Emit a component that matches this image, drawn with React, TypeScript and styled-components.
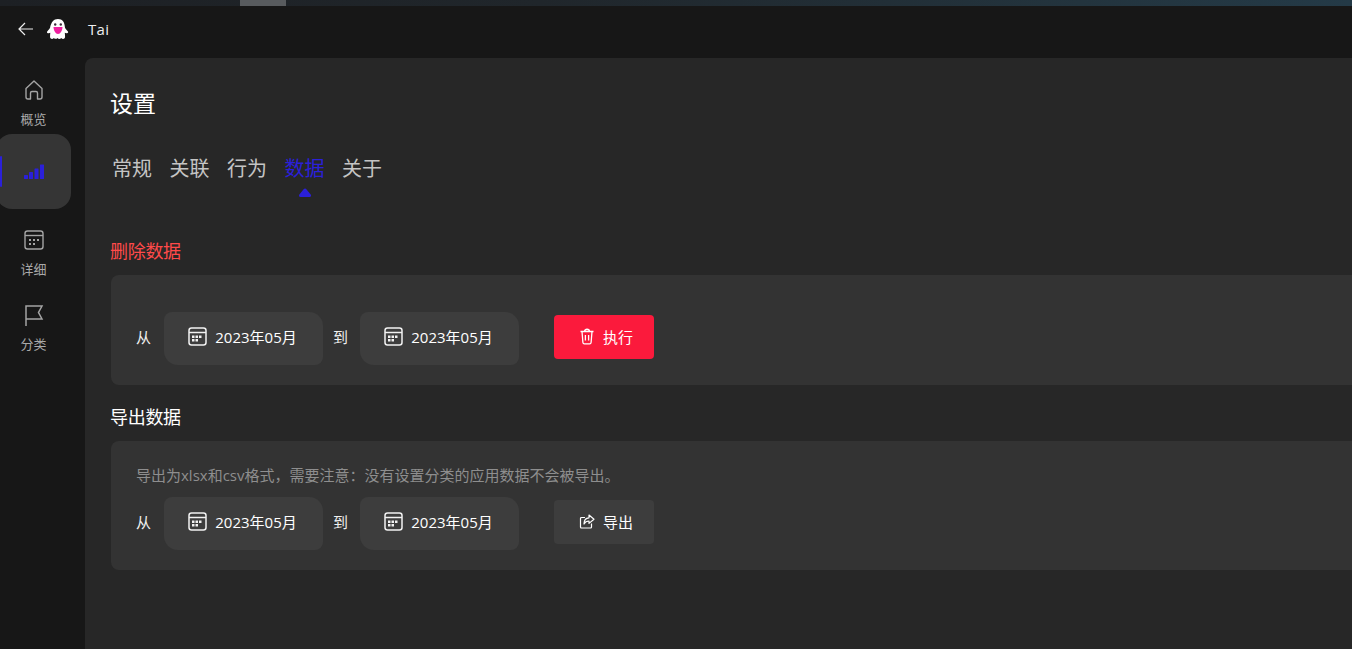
import React from "react";
import styled, { createGlobalStyle } from "styled-components";

const GlobalStyle = createGlobalStyle`
  html, body {
    margin: 0;
    padding: 0;
    height: 100%;
    background: #171717;
    overflow: hidden;
  }
  #root {
    height: 100%;
  }
  * {
    box-sizing: border-box;
  }
`;

const Page = styled.div`
  width: 1352px;
  height: 649px;
  display: flex;
  flex-direction: column;
  overflow: hidden;
  background: #171717;
  color: #fff;
  font-family: "Open Sans", "Noto Sans CJK SC", sans-serif;
`;

const TopStrip = styled.div`
  height: 6px;
  flex: none;
  padding-left: 240px;
  background: linear-gradient(90deg, #1d2024 0%, #20262b 40%, #23343e 80%, #243a47 100%);
`;

const StripThumb = styled.div`
  width: 46px;
  height: 6px;
  background: #585b5e;
`;

const TitleBar = styled.div`
  height: 52px;
  flex: none;
  display: flex;
  align-items: center;
  padding: 0 0 6px 18px;
  font-size: 15px;
  letter-spacing: 0.3px;
  color: #eee;
`;

const Logo = styled.svg`
  margin-left: 14px;
  margin-right: 19px;
`;

const Body = styled.div`
  flex: 1;
  display: flex;
  min-height: 0;
`;

const Sidebar = styled.nav`
  width: 85px;
  flex: none;
  padding-top: 1px;
  display: flex;
  flex-direction: column;
`;

const NavItem = styled.div<{ $active?: boolean }>`
  position: relative;
  width: 75px;
  height: 75px;
  margin-left: -4px;
  padding: ${(p) => (p.$active ? "0" : "20px")} 4px 0;
  display: flex;
  flex-direction: column;
  align-items: center;
  justify-content: ${(p) => (p.$active ? "center" : "flex-start")};
  gap: 10px;
  border-radius: 16px;
  background: ${(p) => (p.$active ? "#353535" : "transparent")};
  color: #a9a9a9;
  font-size: 13px;
  line-height: 16px;

  &::before {
    content: "";
    display: ${(p) => (p.$active ? "block" : "none")};
    position: absolute;
    left: 4px;
    top: 22px;
    width: 2px;
    height: 31px;
    border-radius: 2px;
    background: #2b20d9;
  }
`;

const Main = styled.main`
  flex: 1;
  min-width: 0;
  background: #272727;
  border-top-left-radius: 8px;
  padding: 28px 0 0 25px;
`;

const PageTitle = styled.h1`
  margin: 0;
  font-size: 23px;
  line-height: 34px;
  font-weight: 400;
  color: #fff;
`;

const Tabs = styled.div`
  display: flex;
  gap: 17px;
  margin-top: 35px;
  padding-left: 2px;
`;

const Tab = styled.div<{ $active?: boolean }>`
  position: relative;
  font-size: 20px;
  line-height: 28px;
  width: 40.5px;
  white-space: nowrap;
  color: ${(p) => (p.$active ? "#2b20d9" : "#c4c4c4")};
`;

const TabMark = styled.svg`
  position: absolute;
  left: 13px;
  top: 33px;
`;

const SectionTitle = styled.h2<{ $danger?: boolean }>`
  margin: 0;
  font-size: 18px;
  line-height: 26px;
  font-weight: 400;
  letter-spacing: -0.3px;
  color: ${(p) => (p.$danger ? "#ff4a4a" : "#fff")};
`;

const Section = styled.section<{ $top: number }>`
  margin-top: ${(p) => p.$top}px;
`;

const Card = styled.div<{ $pad: number }>`
  margin: 11px -20px 0 1px;
  padding: ${(p) => p.$pad}px 25px 20px;
  background: #333333;
  border-radius: 8px;
`;

const Hint = styled.p`
  margin: -1px 0 12px;
  font-size: 15px;
  line-height: 20px;
  color: #8e8e8e;
`;

const Row = styled.div`
  display: flex;
  align-items: center;
`;

const RangeLabel = styled.span<{ $narrow?: boolean }>`
  width: ${(p) => (p.$narrow ? 27 : 28)}px;
  padding-bottom: 5px;
  font-size: 15px;
  color: #f0f0f0;
`;

const DateButton = styled.div`
  width: 159px;
  height: 53px;
  padding: 0 2px 5px 0;
  display: flex;
  align-items: center;
  justify-content: center;
  gap: 8px;
  border-radius: 8px 14px 8px 14px;
  background: #3d3d3d;
  font-size: 15px;
  color: #fff;
  margin-right: 10px;
`;

const ActionButton = styled.div<{ $danger?: boolean }>`
  width: 100px;
  height: 44px;
  margin: 0 0 3px 25px;
  padding: 0 0 2px 4px;
  display: flex;
  align-items: center;
  justify-content: center;
  gap: 8px;
  border-radius: 4px;
  background: ${(p) => (p.$danger ? "#fb1a3c" : "#3d3d3d")};
  font-size: 15px;
  color: #fff;
`;

const CalendarIcon = () => (
  <svg width="19" height="19" viewBox="0 0 19 19" fill="none">
    <rect x="1" y="1" width="17" height="17" rx="2.5" stroke="#f2f2f2" strokeWidth="1.5" />
    <path d="M1 5.5h17" stroke="#f2f2f2" strokeWidth="1.5" />
    <path d="M4 8.5h2.500V11H4zM7.500 8.500H10V11H7.500zM11 8.500h2.500V11H11zM4 12h2.500v2.500H4zM7.500 12H10v2.500H7.500z" fill="#f2f2f2" />
  </svg>
);

const DateRange = ({ value }: { value: string }) => (
  <DateButton>
    <CalendarIcon />
    {value}
  </DateButton>
);

const navIconColor = "#a4a4a4";

const App = () => {
  return (
    <Page>
      <GlobalStyle />
      <TopStrip>
        <StripThumb />
      </TopStrip>
      <TitleBar>
        <svg width="15" height="14" viewBox="0 0 15 14" fill="none">
          <path d="M7 1L1 7l6 6M1 7h14" stroke="#eee" strokeWidth="1.2" />
        </svg>
        <Logo width="22" height="23" viewBox="0 0 22 23">
          <path
            d="M11 1c4.600 0 6.600 3.400 6.800 7.600.1 1.700 1.100 3 2.700 4.400 1 .9.9 2-.4 2.200-.9.1-1.700 0-2.300-.4.2 2.600.7 4.800-.6 5.800-1 .7-2.200.2-3-.7-.9 1.300-2.800 1.300-3.700.1-.9 1.200-2.700 1.100-3.600-.1-.8.9-2 1.400-3 .7-1.300-1-.8-3.200-.6-5.800-.6.4-1.400.5-2.300.4-1.300-.2-1.400-1.300-.4-2.200 1.600-1.400 2.600-2.700 2.700-4.400C4.400 4.400 6.400 1 11 1z"
            fill="#fff"
          />
          <circle cx="8.200" cy="6.500" r="1.200" fill="#3a2a3a" />
          <circle cx="13.800" cy="6.500" r="1.200" fill="#3a2a3a" />
          <path d="M6.500 9h9c0 3.600-2.200 7-4.500 7s-4.500-3.400-4.500-7z" fill="#f01fa0" />
        </Logo>
        Tai
      </TitleBar>
      <Body>
        <Sidebar>
          <NavItem>
            <svg width="22" height="22" viewBox="0 0 22 22" fill="none">
              <path
                d="M3 9.500L11 2l8 7.500V18a2 2 0 0 1-2 2h-2.500v-6a1.500 1.500 0 0 0-1.500-1.500H9A1.500 1.500 0 0 0 7.500 14v6H5a2 2 0 0 1-2-2z"
                stroke={navIconColor}
                strokeWidth="1.4"
                strokeLinejoin="round"
              />
            </svg>
            概览
          </NavItem>
          <NavItem $active>
            <svg width="22" height="18" viewBox="0 0 22 18" fill="#2b20d9">
              <rect x="1" y="12" width="4" height="4" rx="0.5" />
              <rect x="6" y="9" width="4" height="7" rx="0.5" />
              <rect x="11.5" y="5.5" width="4" height="10.5" rx="0.5" />
              <rect x="17" y="1.5" width="4" height="14.5" rx="0.5" />
            </svg>
          </NavItem>
          <NavItem>
            <svg width="22" height="22" viewBox="0 0 22 22" fill="none">
              <rect x="2" y="2" width="18" height="18" rx="2.5" stroke={navIconColor} strokeWidth="1.4" />
              <path d="M2 6.500h18" stroke={navIconColor} strokeWidth="1.4" />
              <path
                d="M6 10h2v2H6zM10 10h2v2h-2zM14 10h2v2h-2zM6 14h2v2H6zM10 14h2v2h-2z"
                fill={navIconColor}
              />
            </svg>
            详细
          </NavItem>
          <NavItem>
            <svg width="22" height="22" viewBox="0 0 22 22" fill="none">
              <path d="M3 22V2h16l-3.500 6.500L19 15H3" stroke={navIconColor} strokeWidth="1.5" />
            </svg>
            分类
          </NavItem>
        </Sidebar>
        <Main>
          <PageTitle>设置</PageTitle>
          <Tabs>
            <Tab>常规</Tab>
            <Tab>关联</Tab>
            <Tab>行为</Tab>
            <Tab $active>
              数据
              <TabMark width="14" height="10" viewBox="0 0 14 10">
                <path d="M7 2L11.500 7.500H2.500z" fill="#2b20d9" stroke="#2b20d9" strokeWidth="3" strokeLinejoin="round" />
              </TabMark>
            </Tab>
            <Tab>关于</Tab>
          </Tabs>
          <Section $top={55}>
            <SectionTitle $danger>删除数据</SectionTitle>
            <Card $pad={37}>
              <Row>
                <RangeLabel>从</RangeLabel>
                <DateRange value="2023年05月" />
                <RangeLabel $narrow>到</RangeLabel>
                <DateRange value="2023年05月" />
                <ActionButton $danger>
                  <svg width="16" height="17" viewBox="0 0 16 17" fill="none" stroke="#fff" strokeWidth="1.3">
                    <path d="M1.500 3.500h13M5.500 3.500c0-3 5-3 5 0M3 3.500l.9 11a1.500 1.500 0 0 0 1.500 1.300h5.200a1.500 1.500 0 0 0 1.500-1.300l.9-11M6.400 7v5.500M9.600 7v5.500" />
                  </svg>
                  执行
                </ActionButton>
              </Row>
            </Card>
          </Section>
          <Section $top={19}>
            <SectionTitle>导出数据</SectionTitle>
            <Card $pad={25}>
              <Hint>导出为xlsx和csv格式，需要注意：没有设置分类的应用数据不会被导出。</Hint>
              <Row>
                <RangeLabel>从</RangeLabel>
                <DateRange value="2023年05月" />
                <RangeLabel $narrow>到</RangeLabel>
                <DateRange value="2023年05月" />
                <ActionButton>
                  <svg width="16" height="15" viewBox="0 0 16 15" fill="none" stroke="#fff" strokeWidth="1.2">
                    <path d="M12.500 9.500V13a1 1 0 0 1-1 1H2.500a1 1 0 0 1-1-1V4.500a1 1 0 0 1 1-1H6" />
                    <path d="M10 1l5 4.200-5 4.200V7C7.500 7 6 8 5 10c0-3.500 1.800-6 5-6.200z" strokeLinejoin="round" />
                  </svg>
                  导出
                </ActionButton>
              </Row>
            </Card>
          </Section>
        </Main>
      </Body>
    </Page>
  );
};

export default App;
